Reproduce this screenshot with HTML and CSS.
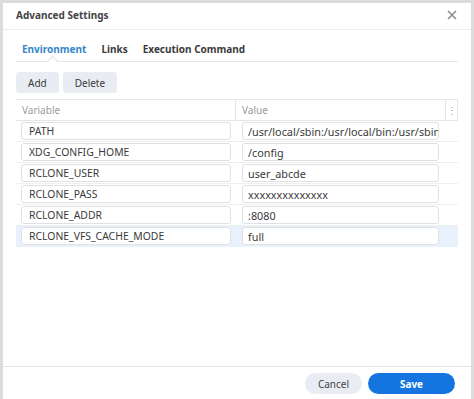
FILE: index.html
```html
<!DOCTYPE html>
<html>
<head>
<meta charset="utf-8">
<link rel="stylesheet" href="styles.css">
</head>
<body>
<div class="dialog">
  <div class="titlebar">
    <span class="title">Advanced Settings</span>
    <svg class="close" width="10" height="10" viewBox="0 0 10 10"><path d="M1 1L9 9M9 1L1 9" stroke="#888" stroke-width="1.5" fill="none"/></svg>
  </div>
  <div class="tabs">
    <span class="tab active">Environment<span class="notch"></span></span>
    <span class="tab">Links</span>
    <span class="tab">Execution Command</span>
  </div>
  <div class="toolbar">
    <button class="btn">Add</button>
    <button class="btn">Delete</button>
  </div>
  <div class="table">
    <div class="row head">
      <div class="cell var">Variable</div>
      <div class="cell val">Value</div>
      <div class="cell kebab">⋮</div>
    </div>
    <div class="row"><div class="cell var"><div class="input">PATH</div></div><div class="cell val"><div class="input">/usr/local/sbin:/usr/local/bin:/usr/sbin:/usr/bin</div></div><div class="cell kebab"></div></div>
    <div class="row"><div class="cell var"><div class="input">XDG_CONFIG_HOME</div></div><div class="cell val"><div class="input">/config</div></div><div class="cell kebab"></div></div>
    <div class="row"><div class="cell var"><div class="input">RCLONE_USER</div></div><div class="cell val"><div class="input">user_abcde</div></div><div class="cell kebab"></div></div>
    <div class="row"><div class="cell var"><div class="input">RCLONE_PASS</div></div><div class="cell val"><div class="input">xxxxxxxxxxxxxx</div></div><div class="cell kebab"></div></div>
    <div class="row"><div class="cell var"><div class="input">RCLONE_ADDR</div></div><div class="cell val"><div class="input">:8080</div></div><div class="cell kebab"></div></div>
    <div class="row sel"><div class="cell var"><div class="input">RCLONE_VFS_CACHE_MODE</div></div><div class="cell val"><div class="input">full</div></div><div class="cell kebab"></div></div>
  </div>
  <div class="spacer"></div>
  <div class="footer">
    <button class="pill cancel">Cancel</button>
    <button class="pill save">Save</button>
  </div>
</div>
</body>
</html>
```
FILE: styles.css
```css
html, body {
  margin: 0;
  padding: 0;
  height: 100%;
}
body {
  background: #dcdcdc;
  padding: 3px 3px 0 3px;
  box-sizing: border-box;
  font-family: "Noto Sans", "Open Sans", sans-serif;
  color: #333;
  overflow: hidden;
}
.dialog {
  background: #fff;
  height: 396px;
  display: flex;
  flex-direction: column;
}
.titlebar {
  height: 27px;
  border-bottom: 1px solid #ececec;
  display: flex;
  align-items: center;
  justify-content: space-between;
  padding: 0 14px 0 13px;
  box-sizing: border-box;
}
.title {
  font-weight: bold;
  font-size: 10px;
  color: #444;
  margin-top: -2px;
}
.close { display: block; margin-top: -2px; }
.tabs {
  margin: 0 13px;
  height: 32px;
  border-bottom: 1px solid #e4e4e4;
  display: flex;
  align-items: center;
  padding-left: 6px;
  gap: 15px;
  padding-top: 6px;
  box-sizing: border-box;
}
.tab {
  font-weight: bold;
  font-size: 10px;
  color: #3b3b3b;
  position: relative;
}
.tab.active { color: #3587c7; }
.notch {
  position: absolute;
  left: 27px;
  bottom: -8px;
  width: 6px;
  height: 6px;
  background: #fff;
  border-left: 1px solid #e4e4e4;
  border-top: 1px solid #e4e4e4;
  transform: rotate(45deg);
}
.toolbar {
  margin: 10px 13px 0 13px;
  display: flex;
  gap: 4px;
}
.btn {
  font-family: "Noto Sans", "Open Sans", sans-serif;
  font-size: 10px;
  color: #3a3a3a;
  background: #e9edf3;
  border: none;
  border-radius: 3px;
  height: 21px;
  padding: 0 12px;
}
.table {
  margin: 6px 13px 0 13px;
  border-top: 1px solid #e8e8e8;
}
.row {
  display: flex;
  height: 21px;
  border-bottom: 1px solid #efefef;
  box-sizing: border-box;
  align-items: center;
}
.row.head {
  border-bottom: 1px solid #e6e6e6;
  height: 21px;
}
.row.sel { background: #e9f2fc; border-bottom-color: #e9f2fc; }
.cell { box-sizing: border-box; height: 100%; display: flex; align-items: center; }
.cell.var { width: 220px; padding: 0 5px; }
.cell.val { width: 210px; padding: 0 7px 0 6px; }
.cell.kebab { width: 12px; justify-content: center; font-size: 10px; color: #999; }
.head .cell { font-size: 10px; color: #9a9a9a; }
.head .cell.var { padding-left: 6px; border-right: 1px solid #e6e6e6; }
.head .cell.val { border-right: 1px solid #e6e6e6; }
.head .cell.kebab { border-right: 1px solid #e6e6e6; }
.input {
  width: 100%;
  height: 18px;
  box-sizing: border-box;
  border: 1px solid #dde1e6;
  border-radius: 3px;
  background: #fff;
  font-size: 10.4px;
  color: #3a3a3a;
  padding: 0 7px;
  display: flex;
  align-items: center;
  white-space: nowrap;
  overflow: hidden;
}
.cell.val .input { padding-left: 5px; font-size: 10.8px; }
.spacer { flex: 1; }
.footer {
  border-top: 1px solid #e6e6e6;
  height: 33px;
  display: flex;
  justify-content: flex-end;
  align-items: flex-start;
  padding: 6px 16px 0 0;
  gap: 6px;
  box-sizing: border-box;
}
.pill {
  font-family: "Noto Sans", "Open Sans", sans-serif;
  font-size: 10px;
  border: none;
  border-radius: 11px;
  height: 21px;
}
.cancel { background: #e9edf3; color: #444; width: 57px; }
.save { background: #1475e1; color: #fff; width: 87px; font-weight: bold; }
```
